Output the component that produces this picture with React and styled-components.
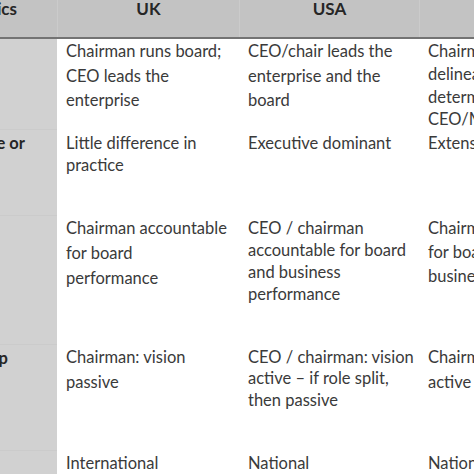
import React from 'react';
import styled, { createGlobalStyle } from 'styled-components';

const Global = createGlobalStyle`
  html, body { margin: 0; padding: 0; background: #fff; overflow: hidden; }
  body { font-family: Lato, "Noto Sans", sans-serif; }
`;

const COLS = '150px 182px 180px 180px';

const Viewport = styled.div`
  width: 474px;
  height: 474px;
  overflow: hidden;
  background: #fff;
`;

const Table = styled.div`
  display: flex;
  flex-direction: column;
  width: 692px;
  margin: -21px 0 0 -93px;
`;

const HeaderRow = styled.div`
  display: grid;
  grid-template-columns: ${COLS};
  height: 58px;
  background: #c3c3c3;
  border-bottom: 2px solid #737373;
`;

const HeaderCell = styled.div`
  display: flex;
  align-items: center;
  justify-content: ${p => (p.$right ? 'flex-end' : 'center')};
  padding-right: ${p => p.$pr || 0}px;
  font-size: 17px;
  font-weight: 700;
  color: #262626;
  white-space: nowrap;
  overflow: hidden;
  border-left: 1px solid ${p => (p.$first ? 'transparent' : '#cbcbcb')};
`;

const Row = styled.div`
  display: grid;
  grid-template-columns: ${COLS};
  height: ${p => p.$h}px;
`;

const Label = styled.div`
  display: flex;
  justify-content: flex-end;
  align-items: flex-start;
  background: #d1d1d1;
  box-shadow: inset 0 -1px 0 #cbcbcb;
  font-size: 16.5px;
  line-height: 24px;
  font-weight: 700;
  color: #262626;
  padding: 0.5px ${p => p.$pr}px 0 0;
  white-space: nowrap;
  overflow: hidden;
`;

const LabelText = styled.span`
  flex: none;
`;

const Cell = styled.div`
  padding: ${p => 12.5 - p.$lh / 2}px 0 0 9px;
  font-size: 16.5px;
  line-height: ${p => p.$lh}px;
  color: #3a3a3a;
  white-space: nowrap;
  overflow: hidden;
`;

const Line = styled.div``;

const header = [
  { text: 'Characteristics', right: true, pr: 40, first: true },
  { text: 'UK' },
  { text: 'USA' },
  { text: 'Japan' },
];

const rows = [
  {
    h: 91,
    label: '',
    pr: 60,
    cells: [
      { lh: 24.5, lines: ['Chairman runs board;', 'CEO leads the', 'enterprise'] },
      { lh: 24.5, lines: ['CEO/chair leads the', 'enterprise and the', 'board'] },
      { lh: 22.7, lines: ['Chairman role', 'delineated and', 'determined by', 'CEO/MD'] },
    ],
  },
  {
    h: 85.5,
    label: 'Executive role or',
    pr: 32,
    cells: [
      { lh: 22, lines: ['Little difference in', 'practice'] },
      { lh: 22, lines: ['Executive dominant'] },
      { lh: 22, lines: ['Extensive'] },
    ],
  },
  {
    h: 129.5,
    label: 'Accountability',
    pr: 64,
    cells: [
      { lh: 25, lines: ['Chairman accountable', 'for board', 'performance'] },
      { lh: 22, lines: ['CEO / chairman', 'accountable for board', 'and business', 'performance'] },
      { lh: 24, lines: ['Chairman accountable', 'for board and', 'business performance'] },
    ],
  },
  {
    h: 105.5,
    label: 'Leadership',
    pr: 49,
    cells: [
      { lh: 24.5, lines: ['Chairman: vision', 'passive'] },
      { lh: 21.8, lines: ['CEO / chairman: vision', 'active \u2013 if role split,', 'then passive'] },
      { lh: 25, lines: ['Chairman: vision', 'active'] },
    ],
  },
  {
    h: 60,
    label: 'Scope',
    pr: 64,
    cells: [
      { lh: 24, lines: ['International'] },
      { lh: 24, lines: ['National'] },
      { lh: 24, lines: ['National'] },
    ],
  },
];

export default function App() {
  return (
    <>
      <Global />
      <Viewport>
        <Table>
          <HeaderRow>
            {header.map((c, i) => (
              <HeaderCell key={i} $right={c.right} $pr={c.pr} $first={c.first}>
                {c.text}
              </HeaderCell>
            ))}
          </HeaderRow>
          {rows.map((r, i) => (
            <Row key={i} $h={r.h}>
              <Label $pr={r.pr}>
                <LabelText>{r.label}</LabelText>
              </Label>
              {r.cells.map((c, j) => (
                <Cell key={j} $lh={c.lh}>
                  {c.lines.map((l, k) => (
                    <Line key={k}>{l}</Line>
                  ))}
                </Cell>
              ))}
            </Row>
          ))}
        </Table>
      </Viewport>
    </>
  );
}
